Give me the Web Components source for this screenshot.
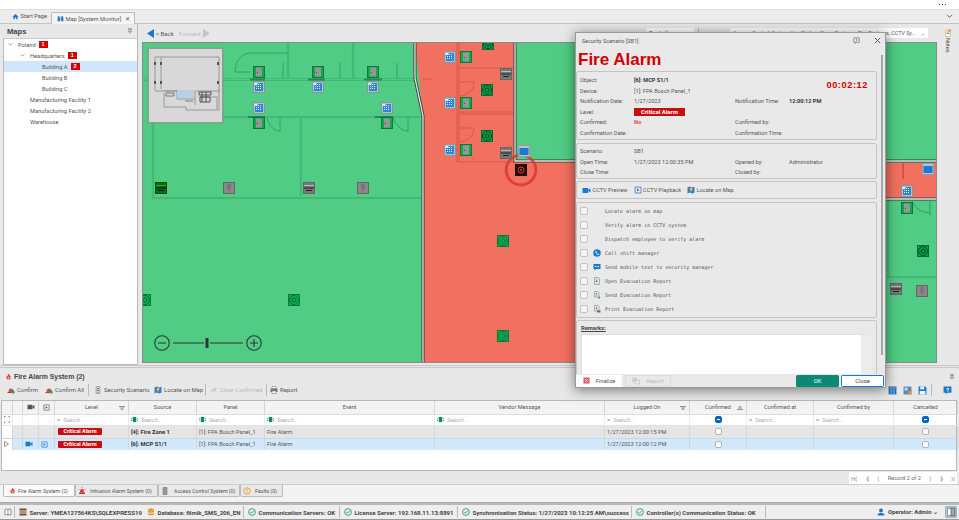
<!DOCTYPE html>
<html lang="en"><head><meta charset="utf-8"><title>System Monitor</title>
<style>
html,body{margin:0;padding:0;background:#e8e8e8}
body{width:959px;height:520px;overflow:hidden;position:relative;display:flex;flex-direction:column;font:5.600px Roboto,"Liberation Sans",Arial,sans-serif;color:#444}
</style></head><body>
<top-strip></top-strip>
<doc-tabs>
  <doc-tab icon="home">Start Page</doc-tab>
  <doc-tab icon="binoc" active>Map [System Monitor]<span slot="close">✕</span></doc-tab>
</doc-tabs>
<main-area>
  <maps-panel>
    <tree-node level="0" chevron badge="1">Poland</tree-node>
    <tree-node level="1" chevron badge="1">Headquarters</tree-node>
    <tree-node level="2" badge="2" selected>Building A</tree-node>
    <tree-node level="2">Building B</tree-node>
    <tree-node level="2">Building C</tree-node>
    <tree-node level="1">Manufacturing Facility 1</tree-node>
    <tree-node level="1">Manufacturing Facility 2</tree-node>
    <tree-node level="1">Warehouse</tree-node>
  </maps-panel>
  <map-view></map-view>
</main-area>
<alarm-panel></alarm-panel>
<status-bar>
  <status-item icon="book" w="11" sep></status-item>
  <status-item icon="server" w="128">Server: YMEA127564KS\SQLEXPRESS19</status-item>
  <status-item icon="db" w="101" sep>Database: filmik_SMS_206_EN</status-item>
  <status-item icon="ok" w="96" sep>Communication Servers: OK</status-item>
  <status-item icon="ok" w="118" sep>License Server: 192.168.11.13:8891</status-item>
  <status-item icon="ok" w="174" sep>Synchronisation Status: 1/27/2023 10:12:25 AM\success</status-item>
  <status-item icon="ok" w="134" sep>Controller(s) Communication Status: OK</status-item>
</status-bar>
<scenario-dialog></scenario-dialog>

<script>
const ICONS={
home:'<path d="M8 2 1 9h2.500v5h3v-4h3v4h3V9H15z" fill="#1976c8"/>',
binoc:'<path d="M2 3h4v3h4V3h4l1 11H9V9H7v5H1z" fill="#2a78c8"/><path d="M6 7h4v2H6z" fill="#f0a030"/>',
pin:'<path d="M3 1.500h10M4 4h8M5 4v3l-2 3h10l-2-3V4M8 10v5" fill="none" stroke="#555" stroke-width="1.300"/>',
flame:'<path d="M8 1c1 3 5 5 5 9a5 5 0 0 1-10 0c0-2 1-3 2-4 0 1 .5 2 1 2 0-3 1-5 2-7z" fill="#d9483b"/><path d="M8 8c.6 1.200 2 2 2 3.500a2 2 0 0 1-4 0C6 10 7.500 9.500 8 8z" fill="#f7b9a8"/>',
confirm:'<path d="M3 12c0-5 2-7 5-7s5 2 5 7z" fill="#d94a3f"/><path d="M1 12h14v2H1z" fill="#b03a30"/><circle cx="12" cy="12" r="3.400" fill="#159a6a"/><path d="m10.500 12 1.200 1.200 2-2.200" stroke="#fff" fill="none"/>',
scenario:'<path d="M4 1h8v14H4z" fill="#cfd6dc" stroke="#77838e"/><path d="M6 4h4v2H6z" fill="#d9483b"/><path d="M6 8h4v2H6z" fill="#2a80d2"/><path d="M6 12h4v1H6z" fill="#3c9a70"/>',
locate:'<path d="M1 3l4-2 6 2 4-2v12l-4 2-6-2-4 2z" fill="#2a80d2"/><path d="M8 3a3 3 0 0 1 3 3c0 2-3 6-3 6S5 8 5 6a3 3 0 0 1 3-3z" fill="#f2a030"/><circle cx="8" cy="6" r="1.200" fill="#fff"/>',
clear:'<path d="M2 9 9 3l5 1-3 3 1 4-6-1-3 4z" fill="#c0c0c0"/>',
report:'<path d="M4 1h8v4H4z" fill="#fff" stroke="#667"/><path d="M1 5h14v7H1z" fill="#6f7b86"/><path d="M4 10h8v5H4z" fill="#fff" stroke="#667"/><path d="M2 7h4v1H2z" fill="#2aa07a"/>',
cols:'<path d="M1 1h14v14H1z" fill="#1b78c8"/><path d="M1 1h14v3H1z" fill="#76838f"/><path d="M5.500 4v11M10.500 4v11" stroke="#cfe4f8"/>',
layout:'<path d="M1 1h14v14H1z" fill="#5b88b4"/><path d="M3 3h5v5H3z" fill="#cfe0ee"/><path d="M9 9h6v6H9z" fill="#ef8f26"/>',
save:'<path d="M1 1h12l2 2v12H1z" fill="#1b78c8"/><path d="M4 1h7v5H4z" fill="#dff"/><path d="M3 9h10v6H3z" fill="#fff"/>',
help:'<path d="M1 1h14v11H8l-3 3v-3H1z" fill="#1b78c8"/><text x="8" y="10" font-size="9" font-family="Liberation Sans" font-weight="700" fill="#fff" text-anchor="middle">?</text>',
cam:'<path d="M1 3.500h10v9H1z" fill="currentColor"/><path d="m11 7 4-3v8l-4-3z" fill="currentColor"/>',
play:'<path d="M2 2h12v12H2z" fill="none" stroke="currentColor" stroke-width="1.500"/><path d="m6 5 5 3-5 3z" fill="currentColor"/>',
book:'<path d="M2 3c2-1 4-1 6 0 2-1 4-1 6 0v11c-2-1-4-1-6 0-2-1-4-1-6 0zM8 3v11" fill="#fff" stroke="#555" stroke-width="1.300"/>',
server:'<path d="M1 1h14v4H1z" fill="#555"/><path d="M1 6h14v4H1z" fill="#e08a2a"/><path d="M1 11h14v4H1z" fill="#555"/>',
db:'<ellipse cx="8" cy="3.500" rx="6" ry="2.500" fill="#ef8f1c"/><path d="M2 5c1 2 11 2 12 0v3c-1 2-11 2-12 0zM2 10c1 2 11 2 12 0v3c-1 2-11 2-12 0z" fill="#ef8f1c"/>',
ok:'<circle cx="8" cy="8" r="6.800" fill="#e4f1ec" stroke="#16866c" stroke-width="1.500"/><path d="m4.500 8 2.500 2.500 4.500-5" fill="none" stroke="#16866c" stroke-width="1.500"/>',
user:'<circle cx="8" cy="5" r="3.800" fill="#1b78c8"/><path d="M1 15c0-4 3-5 7-5s7 1 7 5z" fill="#1b78c8"/>',
panels:'<path d="M1 1h14v14H1z" fill="#dcecf9" stroke="#3f8fd0"/><path d="M3 3h10v10H3z" fill="#fff" stroke="#555"/><path d="M8 3h5v10H8z" fill="#aaa" stroke="#555"/>',
siren:'<path d="M4 11c0-5 1-7 4-7s4 2 4 7z" fill="#e8352e"/><path d="M2 11h12v3H2z" fill="#c9302a"/><path d="M1 4l2 2M15 4l-2 2M8 0v2" stroke="#e8352e" stroke-width="1.300"/>',
access:'<path d="M4 1h8v14H4z" fill="#9a9a9a" stroke="#666"/>',
fault:'<circle cx="8" cy="8" r="6.500" fill="none" stroke="#ef9a22" stroke-width="1.800"/><path d="M8 4v5M8 10.500v2" stroke="#ef9a22" stroke-width="1.800"/>',
phone:'<circle cx="8" cy="8" r="7.500" fill="#1b78d0"/><path d="M5 4c-1 3 3 8 6.500 8l.5-2-2-1-1 .8C8 9 7 8 6.500 6.500L7.500 5.500 6.500 4z" fill="#fff"/>',
sms:'<path d="M1 2h14v10H6l-3 3v-3H1z" fill="#1b78d0"/><path d="M4 7h8" stroke="#fff" stroke-width="2" stroke-dasharray="2 1"/>',
doc1:'<path d="M3 1h8l2 2v12H3z" fill="#dfe3e6" stroke="#6b7680"/><path d="M7 5v5M5 8l2 2 2-2" stroke="#12806a" fill="none" stroke-width="1.400"/>',
doc2:'<path d="M3 1h7l2 2v9H3z" fill="#dfe3e6" stroke="#6b7680"/><path d="M7 4v5" stroke="#12806a" stroke-width="1.400"/><path d="M7 13h5V11l3 2.500L12 16v-2z" fill="#1b78d0"/>',
doc3:'<path d="M3 1h7l2 2v9H3z" fill="#dfe3e6" stroke="#6b7680"/><path d="M7 4v5" stroke="#12806a" stroke-width="1.400"/><path d="M8 11h7v4H8z" fill="#667"/>',
finalize:'<path d="M1 1h14v14H1z" fill="#e35a68"/><path d="m5 5 6 6M11 5l-6 6" stroke="#fff" stroke-width="1.600"/>',
notes:'<path d="M3 2h8l2 2v11H3z" fill="#fff" stroke="#ef8f1c"/><path d="M5 6h6M5 9h6" stroke="#1b78c8" stroke-width="1.400"/><path d="M9 1h5v4H9z" fill="#ef8f1c"/>',
reportdis:'<path d="M1 2h4v3H1zM6 2h4v3H6zM1 7h4v3H1zM6 7h9v7H6z" fill="none" stroke="#b0b0b0"/>'
};
const def=(n,c)=>customElements.define(n,c);
const svg=(n,s,extra='')=>`<svg width="${s}" height="${s}" viewBox="0 0 16 16" ${extra} style="display:block;flex:none">${ICONS[n]||''}</svg>`;
class Base extends HTMLElement{
  constructor(){super();this.attachShadow({mode:'open'});}
  render(h){this.shadowRoot.innerHTML=h;}
}
def('top-strip',class extends Base{connectedCallback(){this.render(`<style>:host{display:flex;justify-content:flex-end;align-items:center;height:9px;background:#fff;padding-right:13px;box-sizing:border-box}
i{display:block;width:1.500px;height:1.500px;background:#333;margin-left:1.500px}</style><i></i><i></i><i></i>`)}});
def('doc-tabs',class extends Base{connectedCallback(){this.render(`<style>:host{display:flex;height:15px;background:#ececec;border-top:1px solid #e0e0e0;box-sizing:border-box;padding-left:10px;position:relative;align-items:flex-end;border-bottom:1px solid #c4c4c4}
svg{position:absolute;right:6px;top:3px}</style><slot></slot><svg width="7" height="7" viewBox="0 0 8 8"><path d="m1 2 3 3 3-3" stroke="#555" fill="none"/></svg>`)}});
def('doc-tab',class extends Base{connectedCallback(){const a=this.hasAttribute('active');this.render(`<style>:host{display:flex;align-items:center;height:12px;box-sizing:border-box;gap:1.500px;font-size:5.700px;color:#555;white-space:nowrap;width:${a?84:41}px;padding:0 4px 0 ${a?5:2}px;${a?'background:#f4f4f4;border:1px solid #bbb;border-bottom:none;border-radius:2px 2px 0 0;margin-bottom:-1px;':'margin-bottom:1px;'}}
::slotted([slot=close]){font-size:6px;color:#555}slot[name=close]{display:block;margin-left:auto}</style>${svg(this.getAttribute('icon'),7)}<slot></slot><slot name="close"></slot>`)}});
def('main-area',class extends Base{connectedCallback(){this.render(`<style>:host{display:flex;height:341px;background:#e8e8e8}</style><slot></slot>`)}});
def('maps-panel',class extends Base{connectedCallback(){this.render(`<style>:host{display:flex;flex-direction:column;box-sizing:border-box;margin-left:3px;flex:none;border-right:1px solid #bbb;height:341px;width:135px}
header{height:14px;flex:none;display:flex;align-items:center;justify-content:space-between;padding:0 4px;font:700 7.600px "Liberation Sans",sans-serif;color:#444;box-sizing:border-box}
.t{flex:1;background:#fff;border-top:1px solid #ccc;border-bottom:1px solid #bbb;border-left:1px solid #bbb}</style>
<header>Maps${svg('pin',6)}</header><div class="t"><slot></slot></div>`)}});
def('tree-node',class extends Base{connectedCallback(){const l=+this.getAttribute('level'),b=this.getAttribute('badge'),s=this.hasAttribute('selected'),c=this.hasAttribute('chevron');
const x=[4,16,28][l];
this.render(`<style>:host{display:flex;align-items:center;height:11px;padding-left:${x}px;background:${s?'#cfe6fb':'transparent'};font-size:5.700px;color:#555}
.c{width:10px;flex:none}.b{background:#d40000;color:#fff;font:700 5.500px "Liberation Sans",sans-serif;margin-left:3px;width:9px;height:7px;line-height:7px;text-align:center;}</style>
<span class="c">${c?'<svg width="5" height="5" viewBox="0 0 8 8"><path d="m1 2 3 3 3-3" stroke="#666" fill="none"/></svg>':''}</span><slot></slot>${b?`<span class="b">${b}</span>`:''}`)}});
def('map-pin',class extends Base{connectedCallback(){const k=this.getAttribute('kind'),x=+this.getAttribute('x')-143,y=+this.getAttribute('y')-43;
const P={
door:'<rect x=".5" y=".5" width="11" height="11" fill="#12a84e" stroke="#0b7a3a"/><rect x="3" y="1.500" width="6" height="9" fill="#8f9a94"/><circle cx="4.500" cy="6.500" r=".5" fill="#333"/>',
key:'<rect x=".5" y=".5" width="11" height="11" fill="#b7bfc6" stroke="#8a949c"/><rect x="2" y="2" width="8" height="8" fill="#2c86d8"/><path d="M3 3.500h5M3 5.500h6M3 7.500h6" stroke="#d9ecfb" stroke-dasharray="1 1"/><rect x="1.500" y="2" width="3" height="2" fill="#dbeefc"/>',
circ:'<rect x=".5" y=".5" width="11" height="11" fill="#12a84e" stroke="#0c7a3c"/><circle cx="6" cy="6" r="4.500" fill="#0fb052" stroke="#063" stroke-width=".8"/><circle cx="6" cy="6" r="2" fill="none" stroke="#063" stroke-width=".9"/>',
circ2:'<rect x=".5" y=".5" width="11" height="11" fill="#0a9a42" stroke="#086a30"/><circle cx="6" cy="6" r="4.500" fill="#0a9a42" stroke="#042" stroke-width=".9"/><circle cx="6" cy="6" r="2" fill="none" stroke="#042" stroke-width=".9"/>',
read:'<rect x=".5" y=".5" width="11" height="11" fill="#777" stroke="#666"/><rect x="1" y="3" width="10" height="1" fill="#bbb"/><path d="M1 6h10M3 8.500h6" stroke="#222" stroke-width="1.200"/>',
readg:'<rect x=".5" y=".5" width="11" height="11" fill="#087010" stroke="#064a0c"/><rect x="1" y="3" width="10" height="1" fill="#2a3"/><path d="M1 6h10M3 8.500h6" stroke="#012" stroke-width="1.200"/>',
gray:'<rect x=".5" y=".5" width="11" height="11" fill="#888" stroke="#666"/><path d="M4 2h4v5l-2 2.500L4 7z" fill="#777"/>',
cam:'<rect x=".5" y=".5" width="11" height="11" fill="#b9c3cc" stroke="#99a"/><rect x="1.500" y="3" width="9" height="7" fill="#1b78d8"/>',
alarm:'<rect x=".5" y=".5" width="11" height="11" fill="#2a0806" stroke="#111"/><circle cx="6" cy="6" r="3" fill="none" stroke="#e33" stroke-width="1"/><circle cx="6" cy="6" r="1" fill="#e33"/>'
};
this.render(`<style>:host{position:absolute;left:${x-6}px;top:${y-6}px;width:12px;height:12px}svg{display:block}</style><svg width="12" height="12" viewBox="0 0 12 12">${P[k]}</svg>`)}});
def('tool-btn',class extends Base{connectedCallback(){const d=this.hasAttribute('disabled');this.render(`<style>:host{display:flex;align-items:center;gap:2px;font-size:5.900px;white-space:nowrap;color:${d?'#bbb':'#555'};flex:none;width:${this.getAttribute('w')||'auto'}px}</style>${svg(this.getAttribute('icon'),8,d?'opacity=".8"':'')}<slot></slot>`)}});
const PINS=[['door',259,72],['door',318,72],['door',373,72],['door',259,123],['door',387,123],['door',466,57],['door',466,103],['door',466,150],['door',907,208],
['key',259,87],['key',318,87],['key',373,87],['key',259,108],['key',387,108],['key',450,57],['key',450,103],['key',450,150],['key',907,191],
['circ2',487,90],['circ2',487,136],['circ2',488,44],['circ',503,241],['circ',503,336],['circ',294,300],['circ',145,300],['circ2',923,251],
['read',506,74],['read',506,153],['read',309,188],['readg',161,188],['read',896,289],['gray',229,188],['gray',363,188],['gray',922,291],['cam',524,151],['cam',928,169],['alarm',521,170]];
const WALL=['M142 79.500h272','M223 117h199','M153 123v75h270','M301 117v79','M288 42v37.500','M353 42v37.500'];
def('map-view',class extends Base{connectedCallback(){this.render(`<style>
:host{display:grid;grid-template-columns:795px 22px;grid-template-rows:18px 321px;flex:none;width:817px;margin-left:4px}
.bar{grid-column:1/3;display:flex;align-items:center;padding-left:5px;font-size:6px;color:#555;position:relative}
.bk{display:flex;align-items:center;gap:2px}.fw{display:flex;align-items:center;gap:2px;margin-left:5px;color:#bbb}
.sel{background:#fff;height:10px;box-sizing:border-box;display:flex;align-items:center;justify-content:space-between;padding:0 3px;color:#555;font-size:5.400px;white-space:nowrap;overflow:hidden;flex:none}
.lab{margin-left:auto;margin-right:5px}.d{width:1px;height:11px;background:#bbb;margin:0 7px 0 4px}
.map{position:relative;overflow:hidden;background:#50cc84;border:1px solid #8a8a8a;box-sizing:border-box;width:795px;height:321px}
.map svg.bg{position:absolute;left:-1px;top:-1px}
.notes{display:flex;flex-direction:column;align-items:center;margin-top:-13px}
.notes span{writing-mode:vertical-rl;font-size:5.500px;color:#444;margin-top:1px}
</style>
<div class="bar"><div class="bk"><svg width="7" height="9" viewBox="0 0 7 9"><path d="M7 0v9L0 4.500z" fill="#1b78d0"/></svg>&lt; Back</div>
<div class="fw">Forward<svg width="7" height="9" viewBox="0 0 7 9"><path d="M0 0v9l7-4.500z" fill="#c4c4c4"/></svg></div>
<span class="lab">Minimap:</span><div class="sel" style="width:48px">Top Left<span>⌄</span></div><div class="d"></div><span style="margin-right:5px">Layers:</span>
<div class="sel" style="width:198px;margin-right:31px"><span>Access Control, Automation Nodes, Alarm Systems, Fire Systems, CCTV Sy...</span><span>⌄</span></div></div>
<div class="map">
<svg class="bg" width="795" height="321" viewBox="142 42 795 321">
<path d="M415 42h100v118h62v203H423V116z" fill="#f1705f"/><path d="M570 163h367v36H570z" fill="#f1705f"/>
<g fill="none" stroke="#37a56a" stroke-width="2.200">${WALL.map(d=>`<path d="${d}"/>`).join('')}<path d="M888 200v77h49"/></g>
<g fill="none" stroke="#56cf88" stroke-width=".9">${WALL.map(d=>`<path d="${d}"/>`).join('')}<path d="M888 200v77h49"/></g>
<g fill="none" stroke="#2f9e5f" stroke-width=".9">
<path d="M283 63v16M340 63v16M397 63v16"/>
<path d="M235 72c0-10 6-18 14-19h39M235 72h15"/>
<path d="M280 117v14c-6 0-12-6-13-14M408 117v14c-6 0-13-6-15-14"/>
</g>
<path d="M250 78.500h15v2h-15zM308 78.500h17v2h-17zM364 78.500h18v2h-18zM248 116h17v2h-17zM375 116h18v2h-18z" fill="#1f8a4c"/>
<g fill="none" stroke="#d65546" stroke-width=".9">
<path d="M457 42v120h58M459 42v120M459 68h55M459 112h55M459 114h55M459 82h15c0 8-5 13-15 14M459 128h15c0 8-5 13-15 14M423 79h8"/>
<path d="M459 42c7 0 10-2 12-5"/>
</g>
<g fill="none" stroke="#3a3a3a" stroke-width="3"><path d="M415 42v36l8 38v247"/><path d="M515 42v119h422"/><path d="M575 199h362"/></g>
<g fill="none" stroke="#e4e4e4" stroke-width="1.300"><path d="M415 42v36l8 38v247"/><path d="M515 42v119h422"/><path d="M575 199h362"/></g>
<g fill="none" stroke="#c03a30" stroke-width="1"><path d="M903 163v16"/></g>
<path d="M912 200c2 8 8 12 18 13M930 200v15" fill="none" stroke="#2f9e5f"/>
<g fill="none" stroke="#333" stroke-width="1.100"><circle cx="162" cy="343" r="7.300"/><circle cx="254" cy="343" r="7.300"/><path d="M158 343h8M250 343h8M254 339v8M173 343h31M210 343h33"/></g><rect x="205.500" y="338" width="3" height="10" rx=".5" fill="#333"/>
<circle cx="521" cy="170" r="14.800" fill="none" stroke="#d93b34" stroke-width="2.800" opacity=".9"/>
</svg>
${PINS.map(p=>`<map-pin kind="${p[0]}" x="${p[1]}" y="${p[2]}"></map-pin>`).join('')}
<mini-map></mini-map>
</div>
<div class="notes">${svg('notes',8)}<span>Notes</span></div>`)}});
def('mini-map',class extends Base{connectedCallback(){this.render(`<style>:host{position:absolute;left:5px;top:5px;width:75px;height:75px;background:#d8d8d8;border:1px solid #999;box-sizing:border-box;box-shadow:0 0 1px #777}svg{display:block}</style>
<svg width="73" height="73" viewBox="0 0 73 73"><g fill="none" stroke="#8a8a8a" stroke-width=".8"><path d="M6 8h64v34H46v8H28v-8H6zM12 8v32M15 42h13"/><path d="M15 44v14h22v3h33V40M46 50v6M50 48h18v12"/></g><rect x="28" y="41" width="17" height="8" fill="#b8cfe8"/><g fill="#555"><rect x="5" y="13" width="2" height="3"/><rect x="11" y="13" width="2" height="3"/><rect x="5" y="32" width="2" height="3"/><rect x="11" y="32" width="2" height="3"/><rect x="68" y="13" width="2" height="3"/><rect x="68" y="32" width="2" height="3"/></g><path d="M50 43h12v3H50zM51 48h10v5H51zM53 43v10M57 43v10" fill="none" stroke="#444" stroke-width=".9"/><path d="M17 44h8v3h-8zM36 52h8" fill="none" stroke="#555" stroke-width=".7"/></svg>`)}});
const COL='11px 10px 16px 16px 74px 68px 68px 170px 170px 85px 57px 67px 80px 64px';
def('alarm-panel',class extends Base{connectedCallback(){this.render(`<style>:host{display:flex;flex-direction:column;height:138px;box-sizing:border-box;border-top:3px double #c8c8c8;background:#e8e8e8;position:relative}
.h{height:15px;display:flex;align-items:center;gap:2px;padding:3px 0 0 5px;font:700 6.900px "Liberation Sans",sans-serif;color:#444;box-sizing:border-box}
.h svg:last-child{margin-left:auto;margin-right:4px}
.tb{height:15px;display:flex;align-items:center;padding-left:7px;position:relative;box-sizing:border-box}
.sp{width:1px;height:12px;background:#bbb;flex:none}
.r{margin-left:auto;display:flex;gap:6px;align-items:center;padding-right:7px}
.g{margin:2px 2px 0 1px;height:73px;background:#fff;border:1px solid #b8b8b8;box-sizing:border-box}
.row{display:grid;grid-template-columns:${COL};align-items:stretch}
.c{display:flex;align-items:center;box-sizing:border-box;border-right:1px solid #d6d6d6;padding:0 2px;font-size:5.600px;color:#555;white-space:nowrap;overflow:hidden;min-width:0}
.hd{height:14px;background:#f3f3f3}.hd .c{justify-content:center;border-bottom:1px solid #ddd;position:relative}
.f{position:absolute;right:3px;top:5px}
.s{height:11px;background:#fff}.s .c{color:#aaa;font-style:italic;gap:3px;border-bottom:1px solid #e4e4e4;border-right-color:#eee}
.d1{height:12px;background:#e5e5e5}.d2{height:12px;background:#d2e8fc;border-top:1px solid #c8d8e8;box-sizing:border-box}
.d1 .c:first-child,.d2 .c:first-child{background:#fff}.d1 .c:nth-child(2){background:#e5e5e5}
.bd{background:#c70f0f;color:#fff;font:700 5.400px Roboto,"Liberation Sans",sans-serif;width:44px;height:7px;line-height:7px;text-align:center;border-radius:1px;margin-left:1px;flex:none}
b{color:#333;font-size:5.800px}
.cb{width:7px;height:7px;border:1px solid #b4b4b4;background:#fff;border-radius:2px;display:block;margin:auto;box-sizing:border-box}
.cb.on{background:#0b66c3;border-color:#0b66c3;position:relative}.cb.on:after{content:"";position:absolute;left:1px;right:1px;top:2px;height:1px;background:#fff}
.eq{color:#888;font-weight:700;font-style:normal}
.pg{height:14px;display:flex;justify-content:flex-end;background:#e8e8e8;border-bottom:1px solid #ccc;box-sizing:border-box;padding-top:1px}
.pg div{width:108px;margin-right:2px;background:#fff;display:flex;align-items:center;justify-content:space-between;padding:0 2px;box-sizing:border-box;color:#666;font-size:5.600px}
.pg i{font-style:normal;color:#888;font-size:6px}
.tabs{height:15px;display:flex;background:#f3f3f3;padding-left:3px;box-sizing:border-box;align-items:flex-start}
.tab{height:12px;display:flex;align-items:center;font-size:5.200px;color:#555;gap:4px;border:1px solid #bbb;border-top:none;box-sizing:border-box;background:#e9e9e9;border-radius:0 0 2px 2px;padding-left:2px;flex:none;white-space:nowrap}
.tab.a{background:#fbfbfb;padding-left:5px;gap:2px}
.foot{height:2px;border-bottom:1px solid #aaa;background:#f3f3f3}
</style>
<div class="h">${svg('flame',7)}Fire Alarm System (2)${svg('pin',6)}</div>
<div class="tb">
<tool-btn icon="confirm" w="38">Confirm</tool-btn><tool-btn icon="confirm" w="43">Confirm All</tool-btn><i class="sp"></i>
<span style="width:5px"></span><tool-btn icon="scenario" w="60">Security Scenario</tool-btn><tool-btn icon="locate" w="51">Locate on Map</tool-btn><i class="sp"></i>
<span style="width:4px"></span><tool-btn icon="clear" w="56" disabled>Clear Confirmed</tool-btn><i class="sp"></i><span style="width:3px"></span><tool-btn icon="report">Report</tool-btn>
<div class="r">${svg('cols',9)}${svg('layout',9)}${svg('save',9)}<i class="sp" style="margin:0 -2px"></i><span style="width:1px"></span>${svg('help',9)}</div></div>
<div class="g">
<div class="row hd"><div class="c"></div><div class="c"></div><div class="c" style="color:#555">${svg('cam',8)}</div><div class="c" style="color:#555">${svg('play',7)}</div>
<div class="c">Level<svg class="f" width="6" height="4" viewBox="0 0 6 4"><path d="M0 .5h6M1 2h4M2 3.500h2" stroke="#777" fill="none" stroke-width=".8"/></svg></div><div class="c">Source</div><div class="c">Panel</div><div class="c">Event</div><div class="c">Vendor Message</div>
<div class="c">Logged On<svg class="f" width="6" height="4" viewBox="0 0 6 4"><path d="M0 .5h6M1 2h4M2 3.500h2" stroke="#777" fill="none" stroke-width=".8"/></svg></div><div class="c">Confirmed<svg class="f" width="6" height="4" viewBox="0 0 6 4"><path d="M0 3.500h6M1 2h4M2 .5h2" stroke="#777" fill="none" stroke-width=".8"/></svg></div><div class="c">Confirmed at</div><div class="c">Confirmed by</div><div class="c">Cancelled</div></div>
<div class="row s"><div class="c"><svg width="7" height="7" viewBox="0 0 8 8"><path d="M0 2V0h2M6 0h2v2M8 6v2H6M2 8H0V6" stroke="#777" fill="none"/></svg></div><div class="c"></div><div class="c"></div><div class="c"></div>
<div class="c"><span class="eq">=</span>Search...</div>
${[0,1,2,3].map(()=>`<div class="c"><svg width="7" height="7" viewBox="0 0 8 8"><path d="M2 1h4v6H2z" fill="#0c8a6a"/><path d="M0 3h1M0 5h1M7 3h1M7 5h1" stroke="#0c8a6a"/></svg>Search...</div>`).join('')}
<div class="c"><span class="eq">=</span>Search...</div><div class="c"><i class="cb on"></i></div><div class="c"><span class="eq">=</span>Search...</div><div class="c"><span class="eq">=</span>Search...</div><div class="c"><i class="cb on"></i></div></div>
${[['d1','[4]: Fire Zone 1','1/27/2023 12:00:15 PM',''],['d2','[6]: MCP S1/1','1/27/2023 12:00:12 PM','1']].map(r=>`<div class="row ${r[0]}"><div class="c">${r[3]?'<svg width="5" height="6" viewBox="0 0 5 6"><path d="M.5.5 4.500 3 .5 5.500z" fill="none" stroke="#999"/></svg>':''}</div><div class="c"></div><div class="c" style="color:#1b78d0">${r[3]?svg('cam',8):''}</div><div class="c" style="color:#1b78d0">${r[3]?svg('play',7):''}</div>
<div class="c"><span class="bd">Critical Alarm</span></div><div class="c"><b>${r[1]}</b></div><div class="c">[1]: FPA Bosch Panel_1</div><div class="c">Fire Alarm</div><div class="c"></div><div class="c">${r[2]}</div><div class="c"><i class="cb"></i></div><div class="c"></div><div class="c"></div><div class="c"><i class="cb"></i></div></div>`).join('')}
</div>
<div class="pg"><div><i>H⟨</i><i>⟪</i><i>⟨</i><span>Record 2 of 2</span><i>⟩</i><i>⟫</i><i>⟩I</i></div></div>
<div class="tabs">
<div class="tab a" style="width:72px">${svg('flame',7)}Fire Alarm System (2)</div><div class="tab" style="width:83px">${svg('siren',8)}Intrusion Alarm System (0)</div><div class="tab" style="width:82px;gap:5px">${svg('access',8)}Access Control System (0)</div><div class="tab" style="width:43px">${svg('fault',8)}Faults (0)</div></div>
<div class="foot"></div>`)}});
def('status-bar',class extends Base{connectedCallback(){this.render(`<style>:host{display:flex;align-items:center;height:17px;box-sizing:border-box;background:#eee;border-top:2px solid #b8b8b8;border-bottom:1px solid #999;padding-left:4px;position:relative}
.r{margin-left:auto;display:flex;align-items:center;gap:3px;font:700 5.900px Roboto,"Liberation Sans",sans-serif;color:#444;padding-right:2px}
.u{margin-right:4px;display:flex;align-items:center;gap:3px}</style><slot></slot>
<div class="r"><div class="u">${svg('user',8)}Operator: Admin ⌄</div>${svg('panels',12)}</div>`)}});
def('status-item',class extends Base{connectedCallback(){const s=this.hasAttribute('sep');this.render(`<style>:host{display:flex;align-items:center;gap:2.500px;flex:none;width:${this.getAttribute('w')}px;box-sizing:border-box;height:12px;padding-left:${+this.getAttribute('w')>20?4:0}px;font:700 6.050px Roboto,"Liberation Sans",sans-serif;color:#444;white-space:nowrap;${s?'border-right:1px solid #bbb;':''}}</style>${svg(this.getAttribute('icon'),8)}<slot></slot>`)}});
def('group-box',class extends Base{connectedCallback(){this.render(`<style>:host{display:block;border:1px solid #c4c4c4;border-radius:2px;box-sizing:border-box;width:301px;background:#e9e9e9;flex:none}</style><slot></slot>`)}});
def('check-item',class extends Base{connectedCallback(){const i=this.getAttribute('icon');this.render(`<style>:host{display:flex;align-items:center;height:14px;font:5px "DejaVu Sans Mono",monospace;color:#555;padding-left:3px}
.b{width:8px;height:8px;border:1px solid #c2c2c2;border-radius:2px;background:#f4f4f4;box-sizing:border-box;flex:none}
.i{width:8px;height:8px;margin:0 4px 0 5px;flex:none}</style><span class="b"></span><span class="i">${i?svg(i,8):''}</span><slot></slot>`)}});
def('scenario-dialog',class extends Base{connectedCallback(){
const row=(a,b,c,d)=>`<span>${a}</span><span>${b||''}</span><span>${c||''}</span><span>${d||''}</span>`;
this.render(`<style>:host{position:absolute;left:575px;top:32px;width:311px;height:356px;background:#e9e9e9;border:1px solid #9a9a9a;box-sizing:border-box;box-shadow:0 2px 12px rgba(0,0,0,.5);display:flex;flex-direction:column;color:#555;font-size:5.600px}
.t{height:15px;display:flex;align-items:center;padding-left:6px;position:relative;flex:none;color:#555;font-size:5.500px}
.t svg{position:absolute}
h1{margin:0;height:23px;font:700 17px/23px "Liberation Sans",sans-serif;color:#d10000;padding-left:2px;flex:none}
.grid{display:grid;grid-template-columns:54px 101px 54px 1fr;grid-auto-rows:10.500px;align-items:center;padding:3px 0 0 3px;position:relative}
.one{height:69px;margin-bottom:3px}.two{height:36px;margin-bottom:2px}.three{height:18px;margin-bottom:3px;display:flex;align-items:center;gap:6px;padding-left:5px}.four{height:116px;margin-bottom:2px;padding-top:1px}
.five{height:56px;position:relative;overflow:hidden}
.three span{display:flex;align-items:center;gap:1.500px}
b{color:#333;font-weight:700}
.timer{position:absolute;right:8px;top:8px;font:700 9.200px "Liberation Sans",sans-serif;letter-spacing:.6px;color:#d10000}
.bd{background:#c70f0f;color:#fff;font:700 6px/8px Roboto,"Liberation Sans",sans-serif;font-style:normal;width:51px;text-align:center;display:block;height:8px}
.rm{font:700 5.800px Roboto,"Liberation Sans",sans-serif;text-decoration:underline;color:#444;padding:4px 0 0 4px;height:13px;box-sizing:border-box}
.ta{position:absolute;left:4px;top:13px;right:4px;height:43px;background:#fff;border:1px solid #ddd;border-right:11px solid #ececec;box-sizing:border-box}
.sb{position:absolute;left:305px;top:22px;height:300px;width:2px;background:#a8a8a8}
.ft{position:absolute;left:0;right:0;bottom:0;height:13px;background:#e9e9e9;display:flex;align-items:center;font-size:5.800px}
.btn{height:12px;display:flex;align-items:center;justify-content:center;box-sizing:border-box;position:relative}
</style>
<div class="t">Security Scenario [SB1]
<svg style="left:277px;top:4px" width="7" height="7" viewBox="0 0 8 8"><path d="M1 1h6v5H4L2.500 7.500V6H1z" fill="none" stroke="#555" stroke-width=".7"/><path d="M4 2v2.500" stroke="#555" stroke-width=".7"/></svg>
<svg style="left:298px;top:4px" width="7" height="7" viewBox="0 0 8 8"><path d="m1 1 6 6M7 1 1 7" stroke="#444"/></svg></div>
<h1>Fire Alarm</h1>
<group-box class="one"><div class="grid">
${row('Object:','<b>[6]: MCP S1/1</b>')}${row('Device:','[1]: FPA Bosch Panel_1')}${row('Notification Date:','1/27/2023','Notification Time:','<b>12:00:12 PM</b>')}${row('Level:','<i class="bd">Critical Alarm</i>')}${row('Confirmed:','<b style="color:#e8434f">No</b>','Confirmed by:')}${row('Confirmation Date:','','Confirmation Time:')}
<div class="timer">00:02:12</div></div></group-box>
<group-box class="two"><div class="grid" style="padding-top:2px">${row('Scenario:','SB1')}${row('Open Time:','1/27/2023 12:00:35 PM','Opened by:','Administrator')}${row('Close Time:','','Closed by:')}</div></group-box>
<group-box class="three"><span>${svg('cam',9).replace('style="','style="color:#1b78d0;')}CCTV Preview</span><span>${svg('play',8).replace('style="','style="color:#1b78d0;')}CCTV Playback</span><span>${svg('locate',8)}Locate on Map</span></group-box>
<group-box class="four">
<check-item>Locate alarm on map</check-item><check-item>Verify alarm in CCTV system</check-item><check-item>Dispatch employee to verify alarm</check-item>
<check-item icon="phone">Call shift manager</check-item><check-item icon="sms">Send mobile text to security manager</check-item><check-item icon="doc1">Open Evacuation Report</check-item><check-item icon="doc2">Send Evacuation Report</check-item><check-item icon="doc3">Print Evacuation Report</check-item>
</group-box>
<group-box class="five"><div class="rm">Remarks:</div><div class="ta"></div></group-box>
<div class="sb"></div>
<div class="ft"><div class="btn" style="width:46px;background:#fff;gap:6px">${svg('finalize',7)}<span>Finalize</span></div><div class="btn" style="width:46px;margin-left:3px;border:1px solid #ddd;color:#bbb;gap:6px">${svg('reportdis',8)}<span>Report</span></div>
<div class="btn" style="width:43px;margin-left:auto;background:#0b8a73;color:#fff;border-radius:1.500px">OK</div><div class="btn" style="width:43px;margin:0 1px 0 2px;background:#fff;border:1px solid #1b78d0;border-radius:1.500px;color:#444">Close</div></div>`)}});
</script>
</body></html>
